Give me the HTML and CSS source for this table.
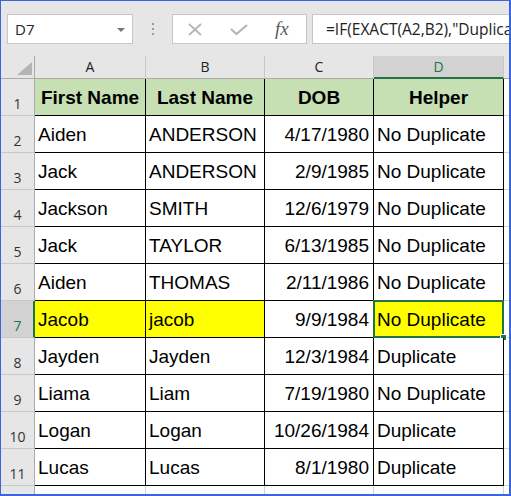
FILE: index.html
```html
<!DOCTYPE html>
<html lang="en">
<head>
<meta charset="utf-8">
<title>Excel EXACT</title>
<link rel="stylesheet" href="styles.css">
</head>
<body>
<div class="frame">
  <div class="fbar">
    <div class="namebox"><span class="nb-text">D7</span><span class="nb-arrow"></span></div>
    <div class="grip"><i></i><i></i><i></i></div>
    <div class="fxbox">
      <svg class="ic-x" width="14" height="13" viewBox="0 0 14 13"><path d="M1 1 L13 12 M13 1 L1 12" stroke="#b5b5b5" stroke-width="1.7" fill="none"/></svg>
      <svg class="ic-check" width="18" height="11" viewBox="0 0 18 11"><path d="M1 5 L6.5 10 L17 1" stroke="#b5b5b5" stroke-width="2.2" fill="none"/></svg>
      <span class="fx">fx</span>
    </div>
    <div class="finput">=IF(EXACT(A2,B2),"Duplicate","No Duplicate")</div>
  </div>
  <div class="sheet">
    <div class="corner"><span class="tri"></span></div>
    <div class="ch">A</div><div class="ch">B</div><div class="ch">C</div><div class="ch on">D</div><div class="ch ext"></div>

    <div class="rh">1</div>
    <div class="c hd">First Name</div><div class="c hd">Last Name</div><div class="c hd">DOB</div><div class="c hd">Helper</div><div class="e"></div>

    <div class="rh">2</div>
    <div class="c">Aiden</div><div class="c">ANDERSON</div><div class="c r">4/17/1980</div><div class="c">No Duplicate</div><div class="e"></div>

    <div class="rh">3</div>
    <div class="c">Jack</div><div class="c">ANDERSON</div><div class="c r">2/9/1985</div><div class="c">No Duplicate</div><div class="e"></div>

    <div class="rh">4</div>
    <div class="c">Jackson</div><div class="c">SMITH</div><div class="c r">12/6/1979</div><div class="c">No Duplicate</div><div class="e"></div>

    <div class="rh">5</div>
    <div class="c">Jack</div><div class="c">TAYLOR</div><div class="c r">6/13/1985</div><div class="c">No Duplicate</div><div class="e"></div>

    <div class="rh">6</div>
    <div class="c">Aiden</div><div class="c">THOMAS</div><div class="c r">2/11/1986</div><div class="c">No Duplicate</div><div class="e"></div>

    <div class="rh on">7</div>
    <div class="c y">Jacob</div><div class="c y">jacob</div><div class="c r">9/9/1984</div><div class="c y sel">No Duplicate<span class="selbox"></span><span class="handle"></span></div><div class="e"></div>

    <div class="rh">8</div>
    <div class="c">Jayden</div><div class="c">Jayden</div><div class="c r">12/3/1984</div><div class="c">Duplicate</div><div class="e"></div>

    <div class="rh">9</div>
    <div class="c">Liama</div><div class="c">Liam</div><div class="c r">7/19/1980</div><div class="c">No Duplicate</div><div class="e"></div>

    <div class="rh">10</div>
    <div class="c">Logan</div><div class="c">Logan</div><div class="c r">10/26/1984</div><div class="c">Duplicate</div><div class="e"></div>

    <div class="rh">11</div>
    <div class="c">Lucas</div><div class="c">Lucas</div><div class="c r">8/1/1980</div><div class="c">Duplicate</div><div class="e"></div>

    <div class="rh last">12</div>
    <div class="g"></div><div class="g"></div><div class="g"></div><div class="g"></div><div class="e"></div>
  </div>
</div>
</body>
</html>
```

FILE: styles.css
```css
* { box-sizing: border-box; }
html, body { margin: 0; padding: 0; }
body { background: #3c64dc; }

.frame {
  width: 511px;
  height: 496px;
  border-style: solid;
  border-color: #3c64dc;
  border-width: 1px 2px 2px 1px;
  background: #e6e6e6;
  display: flex;
  flex-direction: column;
  overflow: hidden;
}

/* formula bar */
.fbar {
  height: 55px;
  flex: none;
  display: flex;
  align-items: flex-start;
  padding: 13px 0 0 6px;
  background: #e6e6e6;
  overflow: hidden;
}
.namebox {
  width: 126px;
  height: 30px;
  flex: none;
  background: #fff;
  border: 1px solid #c6c6c6;
  display: flex;
  align-items: center;
  justify-content: space-between;
  padding: 0 7px 0 7px;
  font-family: "Open Sans", "Noto Sans", sans-serif;
  font-size: 15px;
  color: #262626;
}
.nb-arrow {
  width: 0; height: 0;
  border-left: 4px solid transparent;
  border-right: 4px solid transparent;
  border-top: 4px solid #777;
  margin-top: 1px;
}
.grip {
  width: 39px;
  height: 30px;
  flex: none;
  display: flex;
  flex-direction: column;
  align-items: center;
  justify-content: center;
  gap: 3px;
}
.grip i {
  display: block;
  width: 2px;
  height: 2px;
  background: #9a9a9a;
}
.fxbox {
  width: 135px;
  height: 30px;
  flex: none;
  background: #fff;
  border: 1px solid #c6c6c6;
  display: flex;
  align-items: center;
  padding-left: 15px;
}
.ic-x { margin-right: 28px; }
.ic-check { margin-right: 27px; margin-top: 1px; }
.fx {
  font-family: "Liberation Serif", serif;
  font-style: italic;
  font-size: 19px;
  color: #5a5a5a;
}
.finput {
  flex: 1;
  min-width: 0;
  height: 30px;
  margin-left: 5px;
  margin-right: -40px;
  background: #fff;
  border: 1px solid #c6c6c6;
  border-right: none;
  padding-left: 13px;
  display: flex;
  align-items: center;
  white-space: nowrap;
  overflow: hidden;
  font-family: "Open Sans", "Noto Sans", sans-serif;
  font-size: 15.5px;
  color: #222;
}

/* sheet grid */
.sheet {
  flex: 1;
  display: grid;
  grid-template-columns: 34px 111px 119px 109px 130px 1fr;
  grid-template-rows: 23px repeat(11, 37px) 1fr;
  background: #fff;
  overflow: hidden;
}
.corner {
  position: relative;
  background: #e6e6e6;
  border-right: 1px solid #ababab;
  border-bottom: 1px solid #ababab;
}
.tri {
  position: absolute;
  right: 2px;
  bottom: 3px;
  width: 0; height: 0;
  border-style: solid;
  border-width: 0 0 13px 15px;
  border-color: transparent transparent #b4b4b4 transparent;
}
.ch {
  background: #e6e6e6;
  border-right: 1px solid #c8c8c8;
  border-bottom: 1px solid #ababab;
  display: flex;
  align-items: flex-end;
  justify-content: center;
  padding-bottom: 3px;
  font-family: "Open Sans", "Noto Sans", sans-serif;
  font-size: 14px;
  line-height: 16px;
  color: #222;
}
.ch.on {
  background: #d2d2d2;
  color: #217346;
  border-bottom: 2px solid #217346;
  padding-bottom: 2px;
}
.ch.ext { border-right: none; }

.rh {
  background: #e6e6e6;
  border-right: 1px solid #ababab;
  border-bottom: 1px solid #c8c8c8;
  display: flex;
  align-items: flex-end;
  justify-content: center;
  padding-bottom: 3px;
  font-family: "Open Sans", "Noto Sans", sans-serif;
  font-size: 14px;
  line-height: 16px;
  color: #333;
}
.rh.on {
  background: #d2d2d2;
  color: #217346;
  border-right: 2px solid #217346;
  padding-left: 1px;
}
.rh.last {
  align-items: flex-start;
  padding-top: 5px;
  padding-bottom: 0;
  border-bottom: none;
}

.c {
  position: relative;
  background: #fff;
  border-right: 1px solid #000;
  border-bottom: 1px solid #000;
  display: flex;
  align-items: flex-end;
  padding: 0 3px 6px 3px;
  font-family: "Liberation Sans", Arial, sans-serif;
  font-size: 19px;
  line-height: 22px;
  color: #000;
  white-space: nowrap;
}
.c.hd {
  background: #c6e0b4;
  font-weight: bold;
  justify-content: center;
}
.c.r { justify-content: flex-end; padding-right: 4px; }
.c.y { background: #ffff00; }

.selbox {
  position: absolute;
  left: -1px;
  top: -1px;
  right: -1px;
  bottom: -1px;
  border: 2px solid #217346;
}
.handle {
  position: absolute;
  right: -4px;
  bottom: -4px;
  width: 7px;
  height: 7px;
  background: #217346;
  border: 1px solid #fff;
}

.g {
  background: #fff;
  border-right: 1px solid #d4d4d4;
}
.e {
  background: #fff;
  border-bottom: 1px solid #d4d4d4;
}
```
